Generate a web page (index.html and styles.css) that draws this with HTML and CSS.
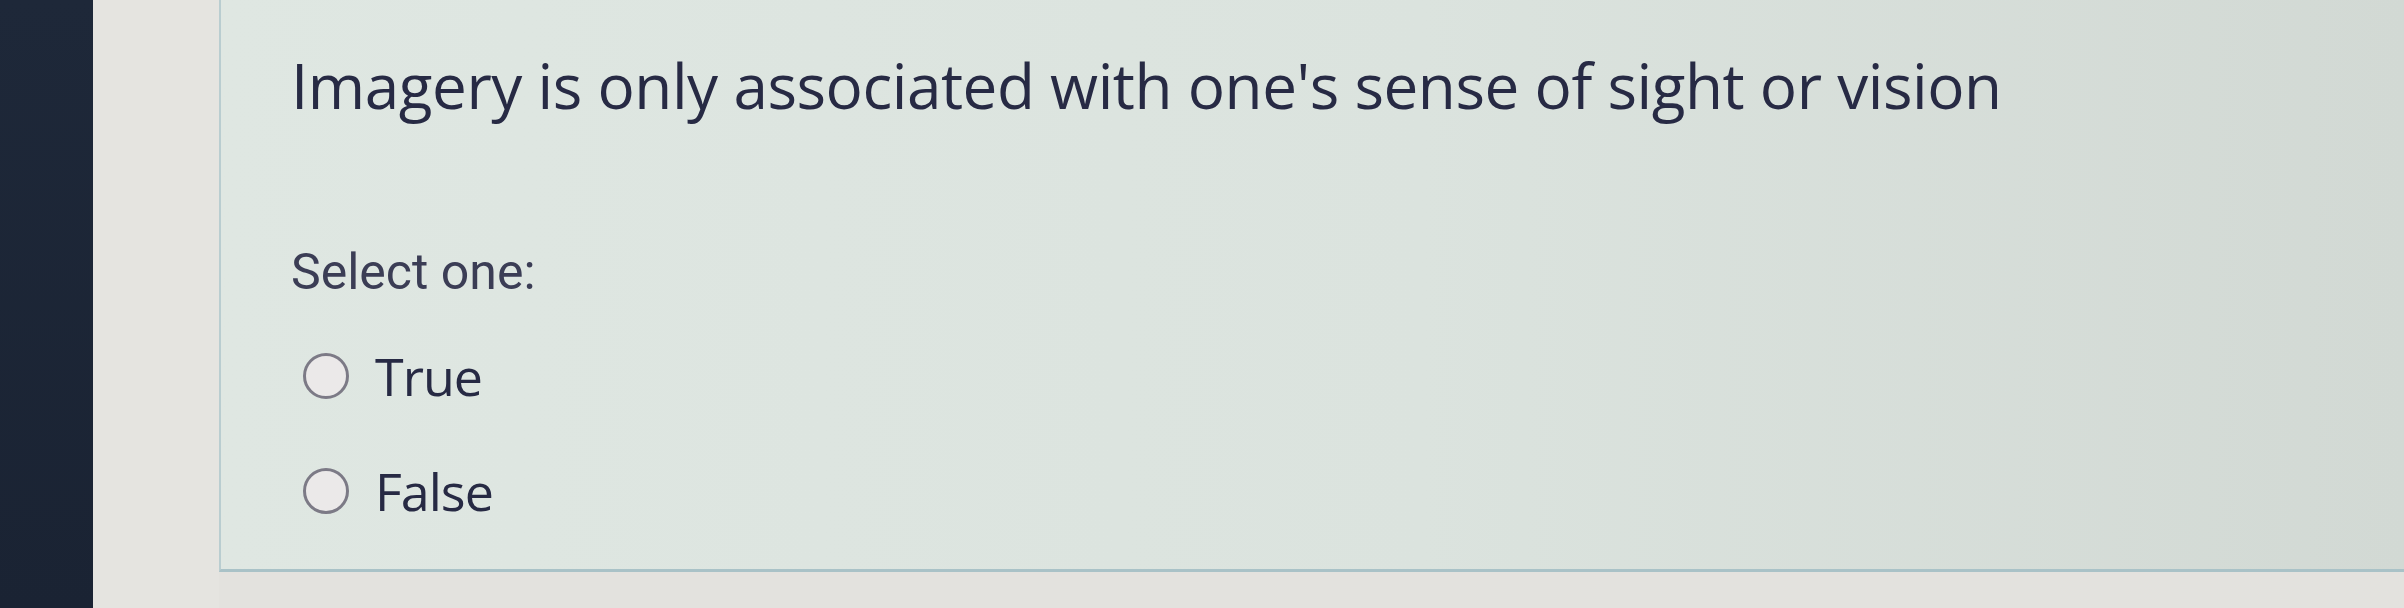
FILE: index.html
```html
<!DOCTYPE html>
<html lang="en">
<head>
  <meta charset="UTF-8">
  <title>Question 4</title>
  <link rel="stylesheet" href="styles.css">
</head>
<body>
  <!-- left navigation drawer (collapsed) -->
  <div class="drawer"></div>
  <div class="gutter"></div>

  <div class="page">
    <div class="que">
      <div class="qtext">Imagery is only associated with one's sense of sight or vision</div>

      <div class="prompt">Select one:</div>

      <div class="answer">
        <label class="option">
          <span class="radio"></span>
          <span class="label">True</span>
        </label>
        <label class="option">
          <span class="radio"></span>
          <span class="label">False</span>
        </label>
      </div>
    </div>
  </div>
</body>
</html>
```

FILE: styles.css
```css
/* Global */
body {
  margin: 0;
  height: 608px;
  display: flex;
  background: #e3e2de;
  overflow: hidden;
}
.drawer {
  width: 93px;
  flex: none;
  background: linear-gradient(180deg, #1e2839, #1a2333);
}
.gutter {
  width: 126px;
  flex: none;
  background: #e5e4e0;
}
.page {
  flex: 1;
  display: flex;
  flex-direction: column;
}
/* Question card */
.que {
  height: 572px;
  box-sizing: border-box;
  padding: 50px 0 0 70px;
  background: linear-gradient(90deg, #dfe7e2 0%, #dbe3de 55%, #d2d9d4 100%);
  border-left: 2px solid #b9cdd0;
  border-bottom: 3px solid #a9c2c7;
  color: #272a44;
}
.qtext {
  font-family: "Open Sans", sans-serif;
  font-size: 62px;
  line-height: 70px;
  letter-spacing: -0.45px;
}
.prompt {
  margin-top: 124px;
  font-family: Roboto, sans-serif;
  font-size: 50px;
  line-height: 56px;
  color: #3b3d55;
}
.answer {
  margin-top: 53px;
  display: flex;
  flex-direction: column;
  gap: 69px;
}
.option {
  display: flex;
  align-items: center;
  gap: 26px;
  padding-left: 12px;
}
.radio {
  width: 40px;
  height: 40px;
  flex: none;
  border: 3px solid #7c7a86;
  border-radius: 50%;
  background: #ebe9e9;
}
.label {
  font-family: "Open Sans", sans-serif;
  font-size: 52px;
  line-height: 44px;
  letter-spacing: -1px;
}
```
